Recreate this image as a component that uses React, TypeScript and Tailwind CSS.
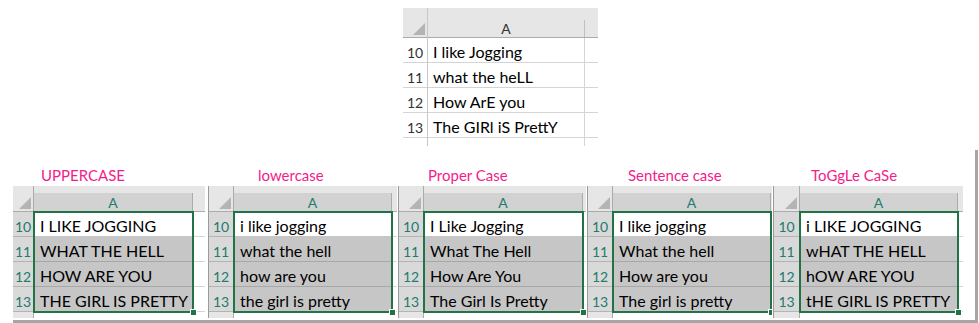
const cellFont = { fontFamily: "Lato, 'Open Sans', sans-serif" };

interface PanelProps {
  label: string;
  labelPad: string;
  width: string;
  rowCol: string;
  colA: string;
  leftLine?: boolean;
  rows: string[];
}

const Corner = () => (
  <svg
    className="absolute right-[2px] bottom-[2px]"
    width="12"
    height="12"
    viewBox="0 0 12 12"
  >
    <polygon points="12,0 12,12 0,12" fill="#b4b4b4" />
  </svg>
);

const TopSheet = () => {
  const rows = ["I like Jogging", "what the heLL", "How ArE you", "The GIRl iS PrettY"];
  return (
    <div className="ml-[403px] mt-[8px] flex w-[195px] h-[138px] bg-white" style={cellFont}>
      <div className="flex flex-col w-[25px] shrink-0 border-r border-[#c8c8c8]">
        <div className="relative h-[30px] bg-[#e6e6e6] border-b border-[#ababab]">
          <Corner />
        </div>
        {[10, 11, 12, 13].map((n) => (
          <div
            key={n}
            className="h-[25px] pt-[5px] leading-[20px] text-center text-[14px] text-[#333] border-b border-[#d4d4d4]"
          >
            {n}
          </div>
        ))}
      </div>
      <div className="flex flex-col w-[157px] shrink-0">
        <div className="h-[30px] bg-[#e6e6e6] border-b border-[#ababab] flex flex-col">
          <div className="h-[12px]" />
          <div className="grow border-r border-[#c0c0c0] text-center leading-[17px] text-[14px] text-[#333]">
            A
          </div>
        </div>
        {rows.map((t) => (
          <div
            key={t}
            className="h-[25px] pl-[5px] pt-[4px] leading-[20px] text-[16px] text-black border-b border-r border-[#d4d4d4] whitespace-nowrap"
          >
            {t}
          </div>
        ))}
        <div className="grow border-r border-[#d4d4d4]" />
      </div>
      <div className="flex flex-col grow">
        <div className="h-[30px] bg-[#e6e6e6] border-b border-[#ababab]" />
        {[0, 1, 2, 3].map((i) => (
          <div key={i} className="h-[25px] border-b border-[#d4d4d4]" />
        ))}
      </div>
    </div>
  );
};

const Panel = ({ label, labelPad, width, rowCol, colA, leftLine, rows }: PanelProps) => (
  <div className={`flex flex-col shrink-0 ${width}`} style={cellFont}>
    <div className={`h-[36px] pt-[16px] leading-[18px] text-[15px] text-[#f31c8a] whitespace-nowrap ${labelPad}`}>
      {label}
    </div>
    <div className={`flex h-[132px] overflow-hidden ${leftLine ? "border-l border-[#9a9a9a]" : ""}`}>
      {/* row numbers */}
      <div className={`flex flex-col shrink-0 border-r border-[#ababab] ${rowCol}`}>
        <div className="relative h-[26px] bg-[#e6e6e6] border-b border-[#ababab]">
          <Corner />
        </div>
        {[10, 11, 12, 13].map((n) => (
          <div
            key={n}
            className="h-[25px] pt-[5px] leading-[20px] text-center bg-[#d9d9d9] text-[14px] text-[#237a6e] border-b border-[#b4b4b4]"
          >
            {n}
          </div>
        ))}
        <div className="h-[6px] bg-[#e6e6e6]" />
      </div>
      {/* column A */}
      <div className={`relative flex flex-col shrink-0 ${colA}`}>
        <div className="h-[7px] bg-[#e6e6e6]" />
        <div className="h-[19px] bg-[#d2d2d2] border-r border-[#ababab] flex items-center justify-center text-[14px] text-[#237a6e]">
          A
        </div>
        {rows.map((t, i) => (
          <div
            key={t}
            className={`h-[25px] pl-[6px] pt-[4px] leading-[20px] text-[16px] text-black whitespace-nowrap overflow-hidden border-b ${
              i === 0 ? "bg-white border-[#c6c6c6]" : "bg-[#c6c6c6] border-[#a8a8a8]"
            }`}
          >
            {t}
          </div>
        ))}
        <div className="h-[6px] bg-white" />
        <div className="absolute top-[25px] bottom-[5px] left-[-1px] right-[-1px] border-2 border-[#217346]" />
        <div className="absolute right-[-4px] bottom-[2px] w-[7px] h-[7px] bg-[#217346] border border-white" />
      </div>
      {/* next column */}
      <div className="flex flex-col grow">
        <div className="h-[7px] bg-[#e6e6e6]" />
        <div className="h-[19px] bg-[#e6e6e6] border-b border-[#ababab]" />
        {[0, 1, 2, 3].map((i) => (
          <div key={i} className="h-[25px] bg-white border-b border-[#d4d4d4]" />
        ))}
      </div>
    </div>
  </div>
);

export default function App() {
  return (
    <div className="w-[979px] h-[323px] bg-white overflow-hidden">
      <TopSheet />
      <div className="ml-[13px] mt-[4px] w-[965px] h-[173px] border-r-[3px] border-b-[3px] border-[#a6a6a6] bg-white">
        <div className="flex h-[170px]">
          <Panel
            label="UPPERCASE"
            labelPad="pl-[28px]"
            width="w-[192px] mr-[3px]"
            rowCol="w-[21px]"
            colA="w-[159px]"
            rows={["I LIKE JOGGING", "WHAT THE HELL", "HOW ARE YOU", "THE GIRL IS PRETTY"]}
          />
          <Panel
            label="lowercase"
            labelPad="pl-[50px]"
            width="w-[189px] mr-[1px]"
            rowCol="w-[25px]"
            colA="w-[158px]"
            leftLine
            rows={["i like jogging", "what the hell", "how are you", "the girl is pretty"]}
          />
          <Panel
            label="Proper Case"
            labelPad="pl-[30px]"
            width="w-[188px] mr-[1px]"
            rowCol="w-[25px]"
            colA="w-[159px]"
            leftLine
            rows={["I Like Jogging", "What The Hell", "How Are You", "The Girl Is Pretty"]}
          />
          <Panel
            label="Sentence case"
            labelPad="pl-[41px]"
            width="w-[185px] mr-[1px]"
            rowCol="w-[25px]"
            colA="w-[158px]"
            leftLine
            rows={["I like jogging", "What the hell", "How are you", "The girl is pretty"]}
          />
          <Panel
            label="ToGgLe CaSe"
            labelPad="pl-[38px]"
            width="w-[190px]"
            rowCol="w-[26px]"
            colA="w-[158px]"
            leftLine
            rows={["i LIKE JOGGING", "wHAT THE HELL", "hOW ARE YOU", "tHE GIRL IS PRETTY"]}
          />
        </div>
      </div>
    </div>
  );
}
